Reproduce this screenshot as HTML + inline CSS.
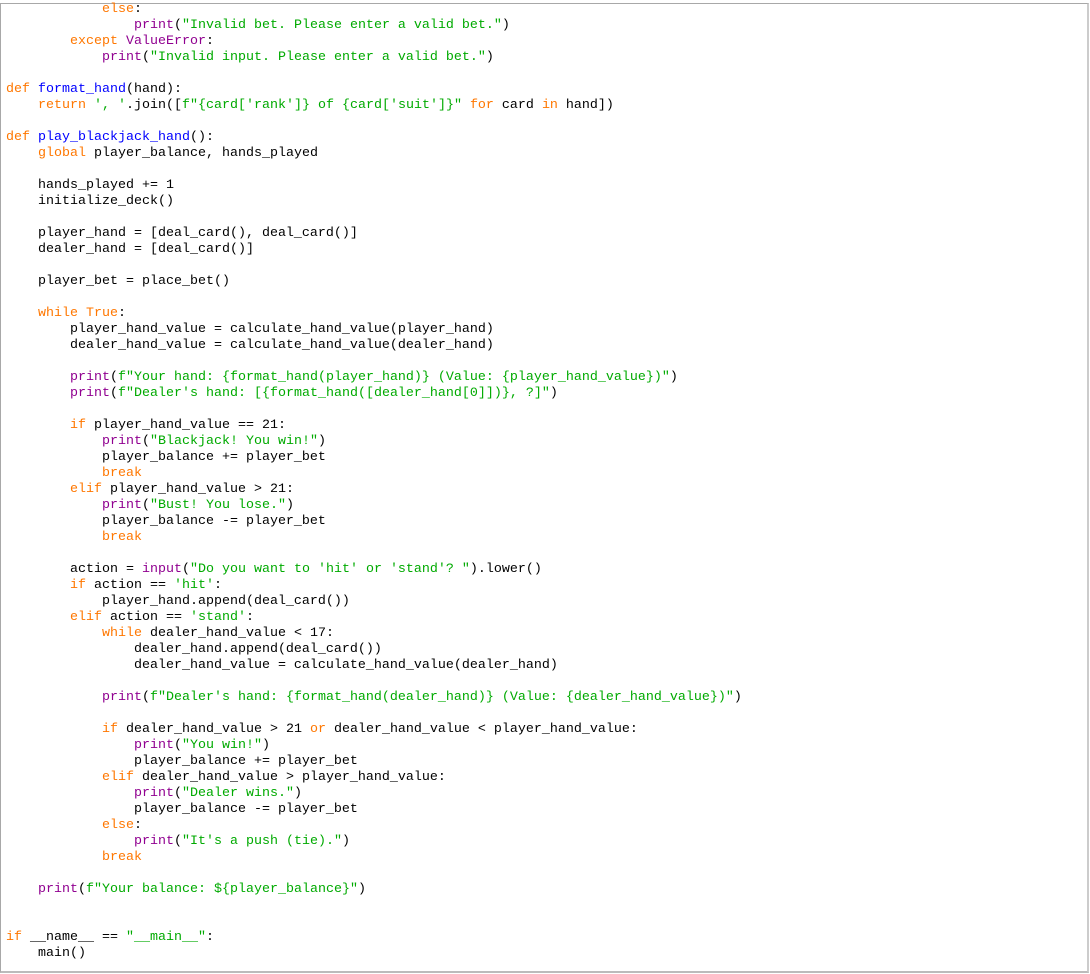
<!DOCTYPE html>
<html><head><meta charset="utf-8"><style>
html,body{margin:0;padding:0;background:#fff;width:1090px;height:974px;overflow:hidden;position:relative}
.box{position:absolute;left:0;top:3px;width:1086px;height:967px;border:1px solid #a8a8a8;border-bottom:2px solid #bbb;border-right:2px solid #ccc}
pre{position:absolute;left:6px;top:2px;margin:0;font-family:"Liberation Mono",monospace;font-size:13.33px;line-height:16px;color:#000}
.k{color:#ff7700}.b{color:#900090}.s{color:#00aa00}.d{color:#0000ff}
</style></head><body>
<div class="box"></div>
<pre>            <span class="k">else</span>:
                <span class="b">print</span>(<span class="s">"Invalid bet. Please enter a valid bet."</span>)
        <span class="k">except</span> <span class="b">ValueError</span>:
            <span class="b">print</span>(<span class="s">"Invalid input. Please enter a valid bet."</span>)

<span class="k">def</span> <span class="d">format_hand</span>(hand):
    <span class="k">return</span> <span class="s">', '</span>.join([<span class="s">f"{card['rank']} of {card['suit']}"</span> <span class="k">for</span> card <span class="k">in</span> hand])

<span class="k">def</span> <span class="d">play_blackjack_hand</span>():
    <span class="k">global</span> player_balance, hands_played

    hands_played += 1
    initialize_deck()

    player_hand = [deal_card(), deal_card()]
    dealer_hand = [deal_card()]

    player_bet = place_bet()

    <span class="k">while</span> <span class="k">True</span>:
        player_hand_value = calculate_hand_value(player_hand)
        dealer_hand_value = calculate_hand_value(dealer_hand)

        <span class="b">print</span>(<span class="s">f"Your hand: {format_hand(player_hand)} (Value: {player_hand_value})"</span>)
        <span class="b">print</span>(<span class="s">f"Dealer's hand: [{format_hand([dealer_hand[0]])}, ?]"</span>)

        <span class="k">if</span> player_hand_value == 21:
            <span class="b">print</span>(<span class="s">"Blackjack! You win!"</span>)
            player_balance += player_bet
            <span class="k">break</span>
        <span class="k">elif</span> player_hand_value &gt; 21:
            <span class="b">print</span>(<span class="s">"Bust! You lose."</span>)
            player_balance -= player_bet
            <span class="k">break</span>

        action = <span class="b">input</span>(<span class="s">"Do you want to 'hit' or 'stand'? "</span>).lower()
        <span class="k">if</span> action == <span class="s">'hit'</span>:
            player_hand.append(deal_card())
        <span class="k">elif</span> action == <span class="s">'stand'</span>:
            <span class="k">while</span> dealer_hand_value &lt; 17:
                dealer_hand.append(deal_card())
                dealer_hand_value = calculate_hand_value(dealer_hand)

            <span class="b">print</span>(<span class="s">f"Dealer's hand: {format_hand(dealer_hand)} (Value: {dealer_hand_value})"</span>)

            <span class="k">if</span> dealer_hand_value &gt; 21 <span class="k">or</span> dealer_hand_value &lt; player_hand_value:
                <span class="b">print</span>(<span class="s">"You win!"</span>)
                player_balance += player_bet
            <span class="k">elif</span> dealer_hand_value &gt; player_hand_value:
                <span class="b">print</span>(<span class="s">"Dealer wins."</span>)
                player_balance -= player_bet
            <span class="k">else</span>:
                <span class="b">print</span>(<span class="s">"It's a push (tie)."</span>)
            <span class="k">break</span>

    <span class="b">print</span>(<span class="s">f"Your balance: ${player_balance}"</span>)


<span class="k">if</span> __name__ == <span class="s">"__main__"</span>:
    main()</pre>
</body></html>
